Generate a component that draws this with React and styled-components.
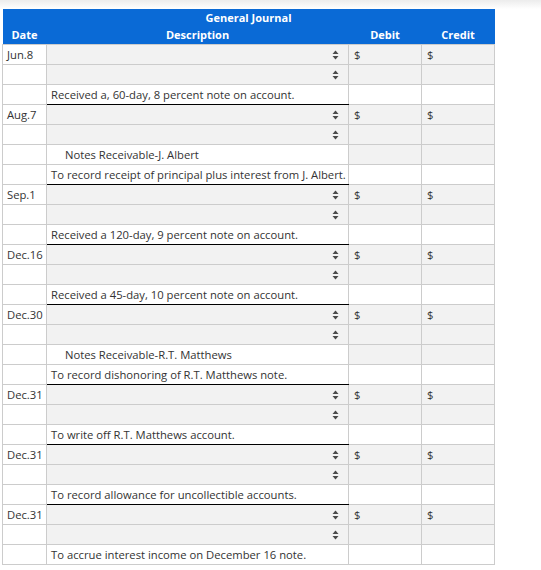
import React from 'react'
import styled, { createGlobalStyle } from 'styled-components'

const GlobalStyle = createGlobalStyle`
  html, body {
    margin: 0;
    padding: 0;
    background: #fff;
    font-family: "Open Sans", "Liberation Sans", Arial, sans-serif;
  }
`

const entries = [
  { date: 'Jun.8', notes: [{ text: 'Received a, 60-day, 8 percent note on account.' }] },
  {
    date: 'Aug.7',
    notes: [
      { text: 'Notes Receivable-J. Albert', indent: true },
      { text: 'To record receipt of principal plus interest from J. Albert.' },
    ],
  },
  { date: 'Sep.1', notes: [{ text: 'Received a 120-day, 9 percent note on account.' }] },
  { date: 'Dec.16', notes: [{ text: 'Received a 45-day, 10 percent note on account.' }] },
  {
    date: 'Dec.30',
    notes: [
      { text: 'Notes Receivable-R.T. Matthews', indent: true },
      { text: 'To record dishonoring of R.T. Matthews note.' },
    ],
  },
  { date: 'Dec.31', notes: [{ text: 'To write off R.T. Matthews account.' }] },
  { date: 'Dec.31', notes: [{ text: 'To record allowance for uncollectible accounts.' }] },
  { date: 'Dec.31', notes: [{ text: 'To accrue interest income on December 16 note.' }] },
]

function SelectArrows() {
  return (
    <svg width="7" height="10" viewBox="0 0 7 10">
      <path d="M3.5 0.5 L6.5 4 L0.5 4 Z" fill="#4a4a4a" />
      <path d="M3.5 9.5 L6.5 6 L0.5 6 Z" fill="#4a4a4a" />
    </svg>
  )
}

function App() {
  return (
    <Page>
      <GlobalStyle />
      <Journal>
        <colgroup>
          <col style={{ width: 44 }} />
          <col style={{ width: 302 }} />
          <col style={{ width: 73 }} />
          <col style={{ width: 73 }} />
        </colgroup>
        <thead>
          <tr>
            <HeadCell colSpan={4} $top>General Journal</HeadCell>
          </tr>
          <tr>
            <HeadCell>Date</HeadCell>
            <HeadCell>Description</HeadCell>
            <HeadCell>Debit</HeadCell>
            <HeadCell>Credit</HeadCell>
          </tr>
        </thead>
        <tbody>
          {entries.map((entry, i) => {
            const last = i === entries.length - 1
            return (
              <React.Fragment key={i}>
                <tr>
                  <DateCell>{entry.date}</DateCell>
                  <SelectCell>
                    <SelectBox><SelectArrows /></SelectBox>
                  </SelectCell>
                  <AmountCell $gray>$</AmountCell>
                  <AmountCell $gray>$</AmountCell>
                </tr>
                <tr>
                  <DateCell />
                  <SelectCell>
                    <SelectBox><SelectArrows /></SelectBox>
                  </SelectCell>
                  <AmountCell $gray />
                  <AmountCell $gray />
                </tr>
                {entry.notes.map((note, j) => {
                  const closing = j === entry.notes.length - 1
                  return (
                    <tr key={j}>
                      <DateCell />
                      <NoteCell $indent={note.indent} $rule={closing && !last}>
                        {note.text}
                      </NoteCell>
                      <AmountCell $gray={!closing} />
                      <AmountCell $gray={!closing} />
                    </tr>
                  )
                })}
              </React.Fragment>
            )
          })}
        </tbody>
      </Journal>
    </Page>
  )
}

export default App

const Page = styled.div`
  padding: 9px 0 0 2px;
  background: linear-gradient(to bottom, #ececec 0px, #ffffff 9px);
`

const Journal = styled.table`
  border-collapse: collapse;
  table-layout: fixed;
  width: 493px;
  font-size: 11.25px;
  color: #333;
`

const HeadCell = styled.th`
  background: #0a6ad6;
  color: #fff;
  font-weight: 700;
  font-size: 11px;
  text-align: center;
  padding: 0;
  height: ${p => (p.$top ? '17px' : '18px')};
  line-height: ${p => (p.$top ? '17px' : '16px')};
  vertical-align: middle;
`

const Cell = styled.td`
  border: 1px solid #cccccc;
  height: 20px;
  padding: 0;
  box-sizing: border-box;
  white-space: nowrap;
  line-height: 18px;
`

const DateCell = styled(Cell)`
  background: #fff;
  padding-left: 4px;
`

const SelectCell = styled(Cell)`
  background: #f2f2f2;
`

const SelectBox = styled.div`
  display: flex;
  align-items: center;
  justify-content: flex-end;
  padding-right: 9px;
  height: 18px;
`

const NoteCell = styled(Cell)`
  background: #fff;
  padding-left: ${p => (p.$indent ? '18px' : '4px')};
  ${p => p.$rule && 'border-bottom: 1px solid #000;'}
`

const AmountCell = styled(Cell)`
  background: ${p => (p.$gray ? '#f2f2f2' : '#fff')};
  padding-left: 5px;
`
